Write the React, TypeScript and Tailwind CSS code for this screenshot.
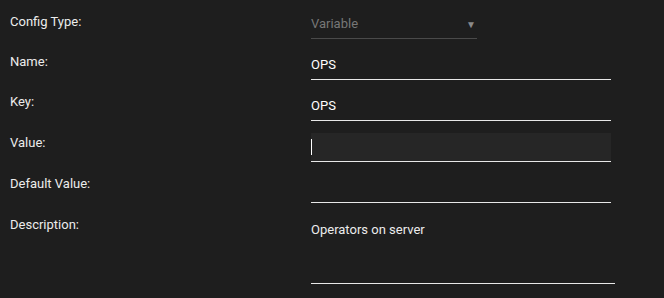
import { useState } from "react";

const rows = ["Config Type:", "Name:", "Key:", "Value:", "Default Value:", "Description:"];

function Label({ text }: { text: string }) {
  return <div className="w-[311px] shrink-0 pl-[10px] pt-[12px] text-[13px] text-[#ececec]">{text}</div>;
}

export default function App() {
  const [name, setName] = useState("OPS");
  const [key, setKey] = useState("OPS");
  const [value, setValue] = useState("");
  const [def, setDef] = useState("");
  const [desc, setDesc] = useState("Operators on server");

  return (
    <div
      className="w-[664px] h-[298px] bg-[#1e1e1e] overflow-hidden"
      style={{ fontFamily: "Roboto, 'Noto Sans', sans-serif" }}
    >
      {/* Config Type */}
      <div className="flex h-[40px]">
        <Label text={rows[0]} />
        <div className="w-[166px] h-[39px] flex items-end">
          <div className="w-full h-[28px] flex items-center justify-between border-b border-[#4a4a4a] pb-[1px]">
            <span className="text-[13px] text-[#777777]">Variable</span>
            <span className="text-[10px] text-[#8a8a8a] pr-[1px]">▼</span>
          </div>
        </div>
      </div>

      {/* Name */}
      <div className="flex h-[40px]">
        <Label text={rows[1]} />
        <div className="w-[300px] h-[40px] flex items-end">
          <input
            value={name}
            onChange={(e) => setName(e.target.value)}
            className="w-full h-[28px] bg-transparent border-b border-[#e8e8e8] text-[13px] text-white outline-none pb-[2px]"
          />
        </div>
      </div>

      {/* Key */}
      <div className="flex h-[41px]">
        <Label text={rows[2]} />
        <div className="w-[300px] h-[41px] flex items-end">
          <input
            value={key}
            onChange={(e) => setKey(e.target.value)}
            className="w-full h-[28px] bg-transparent border-b border-[#e8e8e8] text-[13px] text-white outline-none pb-[2px]"
          />
        </div>
      </div>

      {/* Value */}
      <div className="flex h-[41px]">
        <Label text={rows[3]} />
        <div className="w-[300px] h-[41px] flex items-end">
          <div className="relative w-full h-[29px] bg-[#262626] border-b border-[#e8e8e8]">
            <input
              value={value}
              onChange={(e) => setValue(e.target.value)}
              className="w-full h-full bg-transparent text-[13px] text-white outline-none"
            />
            <span className="absolute left-0 top-[6px] w-[1px] h-[16px] bg-white" />
          </div>
        </div>
      </div>

      {/* Default Value */}
      <div className="flex h-[41px]">
        <Label text={rows[4]} />
        <div className="w-[300px] h-[41px] flex items-end">
          <input
            value={def}
            onChange={(e) => setDef(e.target.value)}
            className="w-full h-[28px] bg-transparent border-b border-[#e8e8e8] text-[13px] text-white outline-none"
          />
        </div>
      </div>

      {/* Description */}
      <div className="flex h-[81px]">
        <Label text={rows[5]} />
        <div className="w-[304px] h-[81px] flex items-end">
          <textarea
            value={desc}
            onChange={(e) => setDesc(e.target.value)}
            className="w-full h-[68px] resize-none bg-transparent border-b border-[#e8e8e8] text-[13px] text-[#ececec] outline-none pt-[4px]"
          />
        </div>
      </div>
    </div>
  );
}
